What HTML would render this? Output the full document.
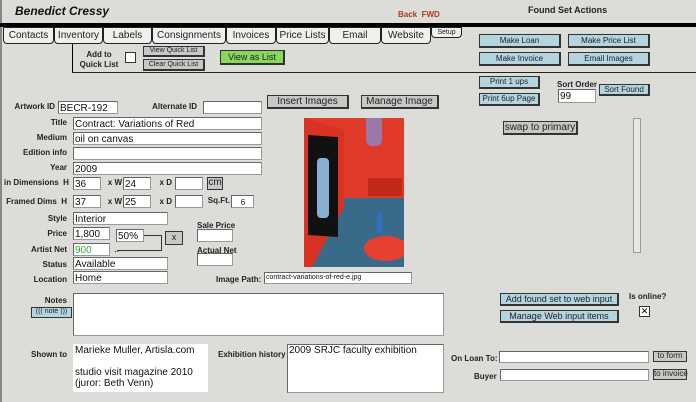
<!DOCTYPE html>
<html><head><meta charset="utf-8"><style>
*{box-sizing:border-box;margin:0;padding:0}
body{width:696px;height:402px;background:#dcdcd8;font-family:"Liberation Sans",Arial,sans-serif;position:relative;overflow:hidden}
.a{position:absolute}
.l{position:absolute;font-size:8px;font-weight:bold;color:#222;text-align:right;white-space:nowrap}
.f{position:absolute;background:#fff;border:1px solid #999;border-top-color:#666;border-left-color:#666;font-size:10px;padding-left:1px;line-height:13px;white-space:nowrap;overflow:hidden;color:#111}
.tab{position:absolute;top:27px;height:17px;border:1px solid #222;border-radius:0 0 4px 4px;background:#f0f0ee;font-size:10px;text-align:center;line-height:15px;color:#222}
.b{position:absolute;border:1px solid #333;border-right-width:2px;border-bottom-width:2px;font-size:9px;text-align:center;color:#222;white-space:nowrap}
.g{background:#c8c8c6}
.bl{background:#b4d4e0}
</style></head><body>
<div class="a" style="left:0;top:0;width:2px;height:402px;background:#888"></div>
<div class="a" style="left:15px;top:4px;font-size:12px;font-weight:bold;font-style:italic;color:#111">Benedict Cressy</div>
<div class="a" style="left:398px;top:10px;font-size:8px;font-weight:bold;color:#b03a1a">Back&nbsp; FWD</div>
<div class="a" style="left:528px;top:5px;font-size:9px;font-weight:bold;color:#222">Found Set Actions</div>
<div class="a" style="left:0;top:23px;width:696px;height:4px;background:#000"></div>
<div class="tab" style="left:3px;width:51px">Contacts</div>
<div class="tab" style="left:54px;width:49px">Inventory</div>
<div class="tab" style="left:103px;width:49px">Labels</div>
<div class="tab" style="left:152px;width:74px">Consignments</div>
<div class="tab" style="left:226px;width:50px">Invoices</div>
<div class="tab" style="left:276px;width:53px">Price Lists</div>
<div class="tab" style="left:329px;width:52px">Email</div>
<div class="tab" style="left:381px;width:50px">Website</div>
<div class="tab" style="left:431px;width:31px;height:11px;font-size:7px;line-height:9px">Setup</div>
<div class="a" style="left:72px;top:43px;width:1px;height:30px;background:#000"></div>
<div class="a" style="left:72px;top:72px;width:624px;height:1px;background:#222"></div>
<div class="l" style="left:75px;top:50px;width:48px;text-align:center;line-height:10px">Add to<br>Quick List</div>
<div class="a" style="left:125px;top:52px;width:11px;height:11px;background:#fff;border:1px solid #333"></div>
<div class="b g" style="left:143px;top:46px;width:62px;height:11px;font-size:7px;line-height:8px">View Quick List</div>
<div class="b g" style="left:143px;top:59px;width:62px;height:12px;font-size:7px;line-height:9px">Clear Quick List</div>
<div class="b" style="left:220px;top:50px;width:65px;height:15px;background:#88d860;font-size:9px;line-height:12px">View as List</div>
<div class="b bl" style="left:479px;top:34px;width:82px;height:14px;line-height:11px;font-size:8px">Make Loan</div>
<div class="b bl" style="left:568px;top:34px;width:82px;height:14px;line-height:11px;font-size:8px">Make Price List</div>
<div class="b bl" style="left:479px;top:52px;width:82px;height:14px;line-height:11px;font-size:8px">Make Invoice</div>
<div class="b bl" style="left:568px;top:52px;width:82px;height:14px;line-height:11px;font-size:8px">Email Images</div>
<div class="b bl" style="left:479px;top:76px;width:61px;height:13px;line-height:10px;font-size:8px">Print 1 ups</div>
<div class="b bl" style="left:479px;top:93px;width:61px;height:13px;line-height:10px;font-size:8px">Print 6up Page</div>
<div class="l" style="left:557px;top:80px">Sort Order</div>
<div class="f" style="left:558px;top:89px;width:38px;height:14px">99</div>
<div class="b bl" style="left:599px;top:84px;width:51px;height:12px;line-height:9px;font-size:8px">Sort Found</div>
<div class="b g" style="left:267px;top:95px;width:82px;height:14px;font-size:10px;line-height:11px">Insert Images</div>
<div class="b g" style="left:361px;top:95px;width:78px;height:14px;font-size:10px;line-height:11px">Manage Image</div>
<div class="b g" style="left:503px;top:121px;width:75px;height:14px;font-size:10px;line-height:11px">swap to primary</div>
<div class="a" style="left:633px;top:118px;width:8px;height:135px;border:1px solid #999;background:#e8e8e6"></div>
<div class="a" style="left:304px;top:118px;width:100px;height:149px;background:#e03a28;overflow:hidden">
<div class="a" style="left:0;top:80px;width:100px;height:69px;background:#3a6a8a"></div>
<div class="a" style="left:0;top:0;width:40px;height:149px;background:#d83222;clip-path:polygon(0 0,100% 8%,100% 60%,20% 100%,0 100%)"></div>
<div class="a" style="left:4px;top:18px;width:30px;height:100px;background:#111;transform:skewY(4deg)"></div>
<div class="a" style="left:13px;top:40px;width:12px;height:60px;background:#8ab0d0;border-radius:4px"></div>
<div class="a" style="left:62px;top:0;width:16px;height:28px;background:#9a78a8;border-radius:0 0 6px 6px"></div>
<div class="a" style="left:60px;top:118px;width:44px;height:25px;background:#e84030;border-radius:50%"></div>
<div class="a" style="left:73px;top:95px;width:5px;height:20px;background:#3070c0"></div>
<div class="a" style="left:64px;top:60px;width:34px;height:18px;background:#c02818"></div>
</div>
<div class="l" style="left:5px;top:102px;width:50px">Artwork ID</div>
<div class="f" style="left:58px;top:101px;width:60px;height:13px">BECR-192</div>
<div class="l" style="left:150px;top:102px;width:47px">Alternate ID</div>
<div class="f" style="left:203px;top:101px;width:59px;height:13px"></div>
<div class="l" style="left:10px;top:118px;width:57px">Title</div>
<div class="f" style="left:73px;top:117px;width:189px;height:13px">Contract: Variations of Red</div>
<div class="l" style="left:10px;top:133px;width:57px">Medium</div>
<div class="f" style="left:73px;top:132px;width:189px;height:13px">oil on canvas</div>
<div class="l" style="left:10px;top:148px;width:57px">Edition info</div>
<div class="f" style="left:73px;top:147px;width:189px;height:13px"></div>
<div class="l" style="left:10px;top:163px;width:57px">Year</div>
<div class="f" style="left:73px;top:162px;width:189px;height:13px">2009</div>
<div class="l" style="left:4px;top:178px;width:63px">in Dimensions&nbsp; H</div>
<div class="f" style="left:73px;top:177px;width:28px;height:13px">36</div>
<div class="l" style="left:104px;top:178px;width:18px">x W</div>
<div class="f" style="left:123px;top:177px;width:28px;height:13px">24</div>
<div class="l" style="left:157px;top:178px;width:15px">x D</div>
<div class="f" style="left:175px;top:177px;width:28px;height:13px"></div>
<div class="b g" style="left:207px;top:177px;width:16px;height:13px;font-size:10px;line-height:10px;border-width:1px">cm</div>
<div class="l" style="left:4px;top:197px;width:63px">Framed Dims&nbsp; H</div>
<div class="f" style="left:73px;top:195px;width:28px;height:13px">37</div>
<div class="l" style="left:104px;top:197px;width:18px">x W</div>
<div class="f" style="left:123px;top:195px;width:28px;height:13px">25</div>
<div class="l" style="left:157px;top:197px;width:15px">x D</div>
<div class="f" style="left:175px;top:195px;width:28px;height:13px"></div>
<div class="l" style="left:205px;top:196px;width:25px">Sq.Ft.</div>
<div class="f" style="left:231px;top:195px;width:23px;height:13px;font-size:8px;text-align:center">6</div>
<div class="l" style="left:10px;top:214px;width:57px">Style</div>
<div class="f" style="left:73px;top:212px;width:95px;height:13px">Interior</div>
<div class="l" style="left:10px;top:229px;width:57px">Price</div>
<div class="f" style="left:73px;top:227px;width:37px;height:13px">1,800</div>
<div class="f" style="left:116px;top:229px;width:28px;height:13px">50%</div>
<div class="a" style="left:144px;top:235px;width:18px;height:1px;background:#333"></div>
<div class="a" style="left:161px;top:235px;width:1px;height:16px;background:#333"></div>
<div class="a" style="left:117px;top:250px;width:45px;height:1px;background:#333"></div>
<div class="a" style="left:113px;top:246px;font-size:8px;color:#333">&#8592;</div>
<div class="b g" style="left:165px;top:231px;width:18px;height:14px;font-size:9px;line-height:11px;border-width:1px">x</div>
<div class="l" style="left:197px;top:221px">Sale Price</div>
<div class="f" style="left:197px;top:229px;width:36px;height:13px"></div>
<div class="l" style="left:197px;top:246px">Actual Net</div>
<div class="f" style="left:197px;top:253px;width:36px;height:13px"></div>
<div class="l" style="left:10px;top:245px;width:57px">Artist Net</div>
<div class="f" style="left:73px;top:243px;width:37px;height:13px;color:#3a3">900</div>
<div class="l" style="left:10px;top:260px;width:57px">Status</div>
<div class="f" style="left:73px;top:257px;width:95px;height:13px">Available</div>
<div class="l" style="left:10px;top:275px;width:57px">Location</div>
<div class="f" style="left:73px;top:271px;width:95px;height:13px">Home</div>
<div class="l" style="left:216px;top:275px">Image Path:</div>
<div class="f" style="left:264px;top:272px;width:148px;height:12px;font-size:7px;line-height:10px">contract-variations-of-red-e.jpg</div>
<div class="l" style="left:10px;top:296px;width:57px">Notes</div>
<div class="b bl" style="left:31px;top:307px;width:41px;height:11px;font-size:7px;line-height:8px;border-width:1px">((( note )))</div>
<div class="f" style="left:73px;top:293px;width:371px;height:43px"></div>
<div class="l" style="left:10px;top:350px;width:57px">Shown to</div>
<div class="a" style="left:73px;top:344px;width:135px;height:48px;background:#fff;font-size:10px;line-height:11px;padding:1px 2px;color:#111">Marieke Muller, Artisla.com<br><br>studio visit magazine 2010<br>(juror: Beth Venn)</div>
<div class="l" style="left:218px;top:350px">Exhibition history</div>
<div class="f" style="left:287px;top:344px;width:157px;height:49px;line-height:11px">2009 SRJC faculty exhibition</div>
<div class="b bl" style="left:500px;top:293px;width:119px;height:13px;font-size:9px;line-height:10px">Add found set to web input</div>
<div class="b bl" style="left:500px;top:310px;width:119px;height:13px;font-size:9px;line-height:10px">Manage Web input items</div>
<div class="l" style="left:629px;top:292px">Is online?</div>
<div class="a" style="left:639px;top:306px;width:11px;height:11px;background:#fff;border:1px solid #333;font-size:9px;line-height:9px;text-align:center">&#10005;</div>
<div class="l" style="left:451px;top:354px">On Loan To:</div>
<div class="f" style="left:499px;top:351px;width:150px;height:12px"></div>
<div class="b g" style="left:653px;top:351px;width:34px;height:11px;font-size:8px;line-height:8px;border-width:1px">to form</div>
<div class="l" style="left:474px;top:372px">Buyer</div>
<div class="f" style="left:500px;top:369px;width:149px;height:12px"></div>
<div class="b g" style="left:653px;top:369px;width:34px;height:11px;font-size:8px;line-height:8px;border-width:1px">to invoice</div>
</body></html>
